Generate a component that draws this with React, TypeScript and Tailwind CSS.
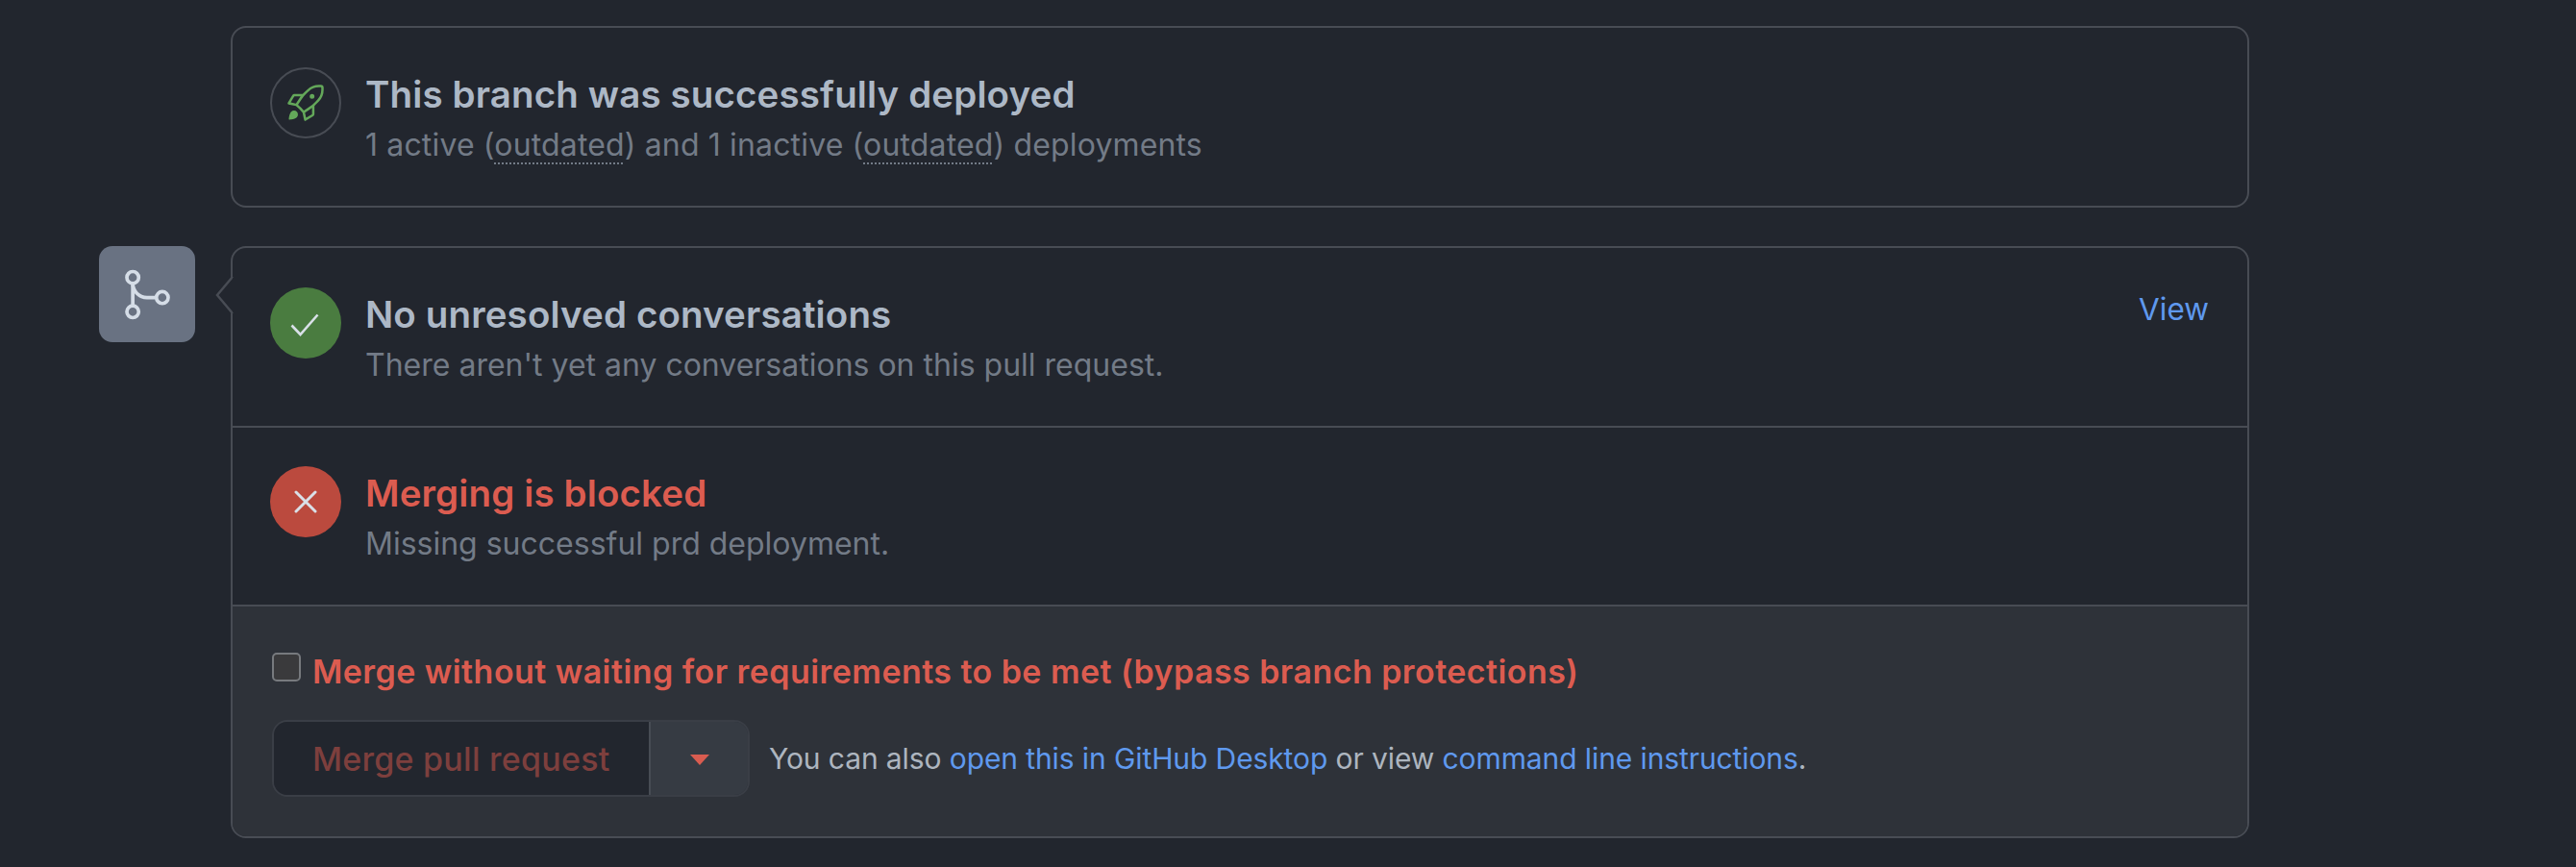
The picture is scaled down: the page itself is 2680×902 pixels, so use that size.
import { GoGitMerge, GoRocket } from 'react-icons/go';

function StatusRow({
  circle,
  title,
  titleClass,
  sub,
  right,
  rowClass,
}: {
  circle: React.ReactNode;
  title: string;
  titleClass: string;
  sub: React.ReactNode;
  right?: React.ReactNode;
  rowClass: string;
}) {
  return (
    <div className={`flex items-start gap-[25px] pr-[40px] pl-[39px] ${rowClass}`}>
      {circle}
      <div className="flex-1">
        <h3 className={`mt-[5px] text-[38.5px] leading-[46px] font-semibold tracking-[0.13px] ${titleClass}`}>{title}</h3>
        <p className="mt-[8px] text-[32px] leading-[44px] text-[#737b87]">{sub}</p>
      </div>
      {right}
    </div>
  );
}

export default function App() {
  return (
    <div className="h-[902px] w-[2680px] overflow-hidden bg-[#22262e] pt-[27px] font-['Inter',sans-serif]">
      <div className="ml-[240px] h-[189px] w-[2100px] rounded-[16px] border-2 border-[#484c54]">
        <StatusRow
          rowClass="pt-[41px]"
          circle={
            <div className="flex size-[74px] items-center justify-center rounded-full border-2 border-[#484c54]">
              <GoRocket className="size-[40px] text-[#64a85a]" />
            </div>
          }
          title="This branch was successfully deployed"
          titleClass="text-[#adb8c6]"
          sub={
            <span className="tracking-[0.15px]">
              1 active (
              <span className="underline decoration-dotted decoration-2 underline-offset-[7px]">outdated</span>
              ) and 1 inactive (
              <span className="underline decoration-dotted decoration-2 underline-offset-[7px]">outdated</span>
              ) deployments
            </span>
          }
        />
      </div>

      <div className="mt-[40px] ml-[103px] flex items-start gap-[37px]">
        <div className="flex size-[100px] items-center justify-center rounded-[14px] bg-[#697282]">
          <GoGitMerge className="size-[59px] text-[#d5dde7]" />
        </div>
        <div className="relative w-[2100px] rounded-[16px] border-2 border-[#484c54]">
          {/* caret pointing at the merge box */}
          <svg className="absolute top-[28px] left-[-18px]" width="20" height="42" viewBox="0 0 20 42">
            <path d="M18 2 L2 21 L18 40" fill="#22262e" stroke="#484c54" strokeWidth="2.5" />
            <rect x="18" y="3" width="2" height="36" fill="#22262e" />
          </svg>

          <StatusRow
            rowClass="h-[187px] border-b-2 border-[#484c54] pt-[41px]"
            circle={
              <div className="flex size-[74px] items-center justify-center rounded-full bg-[#4a7c40]">
                <svg width="30" height="24" viewBox="0 0 30 24" fill="none" className="mt-[4px] mr-[2px]">
                  <path d="M1.5 12.5 L10.5 22 L28.5 1.5" stroke="#d9e0e8" strokeWidth="2.6" />
                </svg>
              </div>
            }
            title="No unresolved conversations"
            titleClass="text-[#adb8c6]"
            sub="There aren't yet any conversations on this pull request."
            right={<a className="text-[31.5px] leading-[46px] text-[#5f99ee]">View</a>}
          />
          <StatusRow
            rowClass="h-[186px] border-b-2 border-[#484c54] pt-[40px]"
            circle={
              <div className="flex size-[74px] items-center justify-center rounded-full bg-[#bb4a3e]">
                <svg width="24" height="24" viewBox="0 0 24 24" fill="none">
                  <path d="M2 2 L22 22 M22 2 L2 22" stroke="#d9e0e8" strokeWidth="3" strokeLinecap="round" />
                </svg>
              </div>
            }
            title="Merging is blocked"
            titleClass="text-[#dc5c50]"
            sub="Missing successful prd deployment."
          />

          <div className="h-[239px] rounded-b-[14px] bg-[#2e3239] pt-[46px] pl-[41px]">
            <label className="flex items-start gap-[12px]">
              <span className="mt-[2px] size-[30px] rounded-[5px] border-2 border-[#777a7e] bg-[#3a3a3c]" />
              <span className="text-[34px] leading-[44px] font-semibold tracking-[0.44px] text-[#dc5c50]">
                Merge without waiting for requirements to be met (bypass branch protections)
              </span>
            </label>
            <div className="mt-[28px] flex items-center">
              <div className="flex h-[80px] w-[497px] overflow-hidden rounded-[16px] border-2 border-[#3a3e46]">
                <div className="flex w-[390px] items-center bg-[#22262e] pl-[40px] text-[34px] font-medium tracking-[0.25px] text-[#7d3f3d]">
                  Merge pull request
                </div>
                <div className="flex flex-1 items-center justify-center border-l-2 border-[#474c54] bg-[#363b43]">
                  <div className="mt-[2px] h-0 w-0 border-x-[10px] border-t-[11px] border-x-transparent border-t-[#d95c50]" />
                </div>
              </div>
              <p className="mt-[1px] ml-[20px] text-[30px] tracking-[-0.1px] text-[#adb5bf]">
                You can also <a className="text-[#5f99ee]">open this in GitHub Desktop</a> or view{' '}
                <a className="text-[#5f99ee]">command line instructions</a>.
              </p>
            </div>
          </div>
        </div>
      </div>
    </div>
  );
}
